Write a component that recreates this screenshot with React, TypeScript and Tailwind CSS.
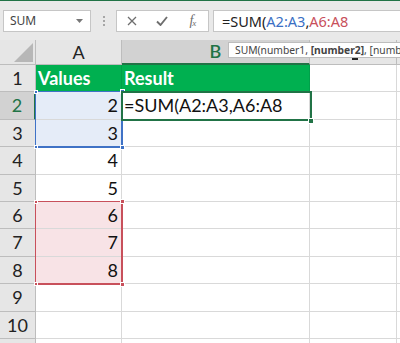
import React from "react";

const rowHeights = [27, 28, 27, 28, 27, 27, 28, 27, 28, 27];
const calibri = { fontFamily: "Lato, 'Open Sans', sans-serif" };

function Toolbar() {
  return (
    <div className="h-[40px] bg-[#e9e9e9] border-t border-[#217346] flex items-start pt-[9px]" style={{ fontFamily: "'Noto Sans', 'Open Sans', sans-serif" }}>
      <div className="ml-[3px] w-[88px] h-[22px] bg-white border border-[#c6c6c6] flex items-center justify-between pl-[6px] pr-[7px]">
        <span className="text-[12px] text-[#444] leading-none">SUM</span>
        <svg width="7" height="4" viewBox="0 0 7 4"><path d="M0 0 L7 0 L3.5 4 Z" fill="#777" /></svg>
      </div>
      <div className="w-[25px] h-[22px] flex flex-col items-center justify-center gap-[2px]">
        <div className="w-[2px] h-[2px] bg-[#a6a6a6]" />
        <div className="w-[2px] h-[2px] bg-[#a6a6a6]" />
        <div className="w-[2px] h-[2px] bg-[#a6a6a6]" />
      </div>
      <div className="w-[93px] h-[22px] bg-white border border-[#c6c6c6] flex items-center">
        <div className="w-[31px] flex justify-center">
          <svg width="10" height="10" viewBox="0 0 10 10"><path d="M1 1 L9 9 M9 1 L1 9" stroke="#6e6e6e" strokeWidth="1.3" /></svg>
        </div>
        <div className="w-[31px] flex justify-center">
          <svg width="12" height="10" viewBox="0 0 12 10"><path d="M1 5.5 L4.5 9 L11 1" stroke="#6e6e6e" strokeWidth="1.9" fill="none" /></svg>
        </div>
        <div className="w-[31px] flex justify-center items-end leading-none text-[#6e6e6e]" style={{ fontFamily: "'Liberation Serif', serif" }}>
          <span className="italic text-[14px]">f</span>
          <span className="italic text-[9px] -ml-[1px]">x</span>
        </div>
      </div>
      <div className="ml-[4px] flex-1 h-[22px] bg-white border border-r-0 border-[#c6c6c6] flex items-center pl-[8px] text-[14.5px] leading-none">
        <span className="text-[#222]">=SUM(</span>
        <span className="text-[#3a6fc4]">A2:A3</span>
        <span className="text-[#222]">,</span>
        <span className="text-[#c8505b]">A6:A8</span>
      </div>
    </div>
  );
}

function HeaderRow() {
  return (
    <div className="flex h-[25px]" style={calibri}>
      <div className="w-[36px] bg-[#e6e6e6] border-r border-b border-[#bdbdbd] relative overflow-hidden">
        <svg className="absolute left-0 top-0" width="35" height="24" viewBox="0 0 35 24">
          <path d="M14 22 L33 22 L33 3 Z" fill="#b7b7b7" />
        </svg>
      </div>
      <div className="w-[86px] bg-[#e6e6e6] border-r border-b border-[#bdbdbd] flex items-center justify-center text-[18px] text-[#222]">A</div>
      <div className="w-[188px] bg-[#d2d2d2] border-r border-[#bdbdbd] border-b-2 border-b-[#217346] flex items-center justify-center text-[18px] text-[#217346] font-semibold">B</div>
      <div className="w-[87px] bg-[#e6e6e6] border-r border-b border-[#bdbdbd]" />
      <div className="flex-1 bg-[#e6e6e6] border-b border-[#bdbdbd]" />
    </div>
  );
}

function Row({ idx, h }: { idx: number; h: number }) {
  const n = idx + 1;
  const selected = n === 2;
  let aText = "";
  let aBg = "bg-white";
  let bText = "";
  let bBg = "bg-white";
  if (n === 1) {
    aText = "Values";
    aBg = "bg-[#00b050]";
    bText = "Result";
    bBg = "bg-[#00b050]";
  } else if (n >= 2 && n <= 8) {
    aText = String(n);
    if (n <= 3) aBg = "bg-[#e5ecf8]";
    if (n >= 6) aBg = "bg-[#f8e3e6]";
  }
  if (n === 2) bText = "=SUM(A2:A3,A6:A8";
  const head = n === 1;
  return (
    <div className="flex" style={{ height: h, ...calibri }}>
      <div
        className={
          selected
            ? "w-[36px] bg-[#d2d2d2] border-r-2 border-r-[#217346] border-b border-b-[#bdbdbd] flex items-center justify-center text-[18px] text-[#217346]"
            : "w-[36px] bg-[#e6e6e6] border-r border-b border-[#bdbdbd] flex items-center justify-center text-[18px] text-[#222]"
        }
      >
        {n}
      </div>
      <div
        className={`w-[86px] ${aBg} border-r border-b ${head ? "border-[#00a04a]" : "border-[#d9d9d9]"} flex items-center ${head ? "justify-start pl-[2px] text-white font-bold" : "justify-end pr-[3px] text-[#111]"} text-[18px]`}
      >
        {aText}
      </div>
      <div
        className={`w-[188px] ${bBg} border-r border-b ${head ? "border-[#00a04a]" : "border-[#d9d9d9]"} flex items-center pl-[2px] ${head ? "text-white font-bold" : "text-[#111]"} text-[18px] whitespace-nowrap`}
      >
        {bText}
      </div>
      <div className="w-[87px] bg-white border-r border-b border-[#d9d9d9]" />
      <div className="flex-1 bg-white border-b border-[#d9d9d9]" />
    </div>
  );
}

function FillerRow() {
  return (
    <div className="flex h-[10px]">
      <div className="w-[36px] bg-[#e6e6e6] border-r border-[#bdbdbd]" />
      <div className="w-[86px] bg-white border-r border-[#d9d9d9]" />
      <div className="w-[188px] bg-white border-r border-[#d9d9d9]" />
      <div className="w-[87px] bg-white border-r border-[#d9d9d9]" />
      <div className="flex-1 bg-white" />
    </div>
  );
}

function Handle({ x, y, s, c }: { x: number; y: number; s: number; c: string }) {
  return (
    <div
      className="absolute border border-white"
      style={{ left: x - s / 2, top: y - s / 2, width: s, height: s, backgroundColor: c }}
    />
  );
}

function Range({ x1, y1, x2, y2, c }: { x1: number; y1: number; x2: number; y2: number; c: string }) {
  return (
    <>
      <div
        className="absolute"
        style={{
          left: x1,
          top: y1,
          width: x2 - x1,
          height: y2 - y1,
          borderLeft: `1px solid ${c}`,
          borderTop: `1px solid ${c}`,
          borderRight: `2px solid ${c}`,
          borderBottom: `2px solid ${c}`,
        }}
      />
      <Handle x={x1 + 0.5} y={y1 + 0.5} s={4} c={c} />
      <Handle x={x2 - 1} y={y1 + 0.5} s={5} c={c} />
      <Handle x={x1 + 0.5} y={y2 - 1} s={4} c={c} />
      <Handle x={x2 - 1} y={y2 - 1} s={5} c={c} />
    </>
  );
}

export default function App() {
  return (
    <div className="w-[400px] h-[343px] overflow-hidden bg-white relative">
      <Toolbar />
      <HeaderRow />
      {rowHeights.map((h, i) => (
        <Row key={i} idx={i} h={h} />
      ))}
      <FillerRow />
      <Range x1={35} y1={91} x2={123} y2={148} c="#3f72c6" />
      <Range x1={35} y1={201} x2={123} y2={285} c="#c8505b" />
      <div className="absolute left-[121px] top-[91px] w-[191px] h-[30px] border-2 border-[#217346]" />
      <div className="absolute left-[308px] top-[118px] w-[6px] h-[6px] bg-[#217346] border border-white" />
      <div
        className="absolute left-[228px] top-[42px] h-[16px] pl-[6px] pr-[4px] bg-white border border-[#bdbdbd] flex items-center text-[10.3px] text-[#444] whitespace-nowrap leading-none"
        style={{ fontFamily: "'Noto Sans', 'Open Sans', sans-serif" }}
      >
        <span>SUM(number1,&nbsp;</span>
        <span className="font-bold">[number2]</span>
        <span>, [number3], ...)</span>
      </div>
      <div className="absolute left-[352px] top-[58px] w-[6px] h-[2px] bg-[#222]" />
    </div>
  );
}
